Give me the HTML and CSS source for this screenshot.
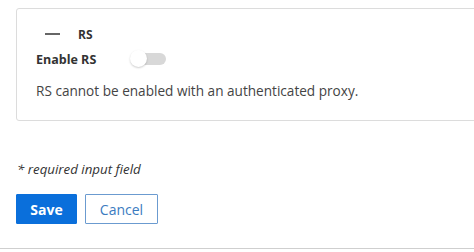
FILE: index.html
```html
<!DOCTYPE html>
<html>
<head>
<meta charset="utf-8">
<link rel="stylesheet" href="styles.css">
</head>
<body>
<div class="page">
  <section class="card">
    <div class="section-title">
      <span class="dash"></span>
      <span class="title">RS</span>
    </div>
    <div class="field">
      <span class="label">Enable RS</span>
      <span class="toggle"><span class="track"></span><span class="knob"></span></span>
    </div>
    <p class="note">RS cannot be enabled with an authenticated proxy.</p>
  </section>
  <p class="required">* required input field</p>
  <div class="actions">
    <button class="btn btn-primary">Save</button>
    <button class="btn btn-secondary">Cancel</button>
  </div>
</div>
</body>
</html>
```

FILE: styles.css
```css
html, body {
  margin: 0;
  padding: 0;
  background: #fff;
  overflow: hidden;
}
body {
  font-family: "Open Sans", "Noto Sans", sans-serif;
  color: #333;
  width: 474px;
  height: 252px;
}
.page {
  padding: 8px 0 0 16px;
  height: 240px;
  border-bottom: 1px solid #cfcfcf;
  box-sizing: content-box;
}
.card {
  border: 1px solid #dcdcdc;
  border-radius: 3px;
  margin-right: -4px;
  height: 111px;
  padding: 0 0 0 19px;
  box-sizing: content-box;
}
.section-title {
  display: flex;
  align-items: center;
  height: 18px;
  margin-top: 16px;
  padding-left: 9px;
}
.dash {
  width: 15px;
  height: 2px;
  background: #666;
  margin-right: 18px;
}
.title {
  font-weight: 700;
  font-size: 12px;
  color: #333;
}
.field {
  display: flex;
  align-items: center;
  height: 20px;
  margin-top: 6px;
}
.label {
  font-weight: 700;
  font-size: 12.5px;
  width: 94px;
}
.toggle {
  position: relative;
  width: 37px;
  height: 18px;
  display: inline-block;
}
.track {
  position: absolute;
  left: 4px;
  top: 3px;
  width: 32px;
  height: 12px;
  border-radius: 6px;
  background: #d8d8d8;
}
.knob {
  position: absolute;
  left: 0;
  top: 0;
  width: 17px;
  height: 17px;
  border-radius: 50%;
  background: #fff;
  box-shadow: 0 1px 2px rgba(0,0,0,0.2);
}
.note {
  margin: 13px 0 0;
  font-size: 13.6px;
  line-height: 18px;
  color: #444;
}
.required {
  margin: 39px 0 0 1px;
  font-size: 13.3px;
  font-style: italic;
  line-height: 18px;
  color: #333;
}
.actions {
  display: flex;
  gap: 8px;
  margin-top: 16px;
}
.btn {
  font-family: "Open Sans", "Noto Sans", sans-serif;
  font-size: 14px;
  height: 30px;
  border-radius: 1px;
  padding: 0;
  cursor: pointer;
}
.btn-primary {
  width: 61px;
  background: #0a6fdb;
  color: #fff;
  border: 1px solid #0a6fdb;
  font-weight: 700;
}
.btn-secondary {
  width: 73px;
  background: #fff;
  color: #3b7bbf;
  border: 1px solid #6b9bd0;
}
```
